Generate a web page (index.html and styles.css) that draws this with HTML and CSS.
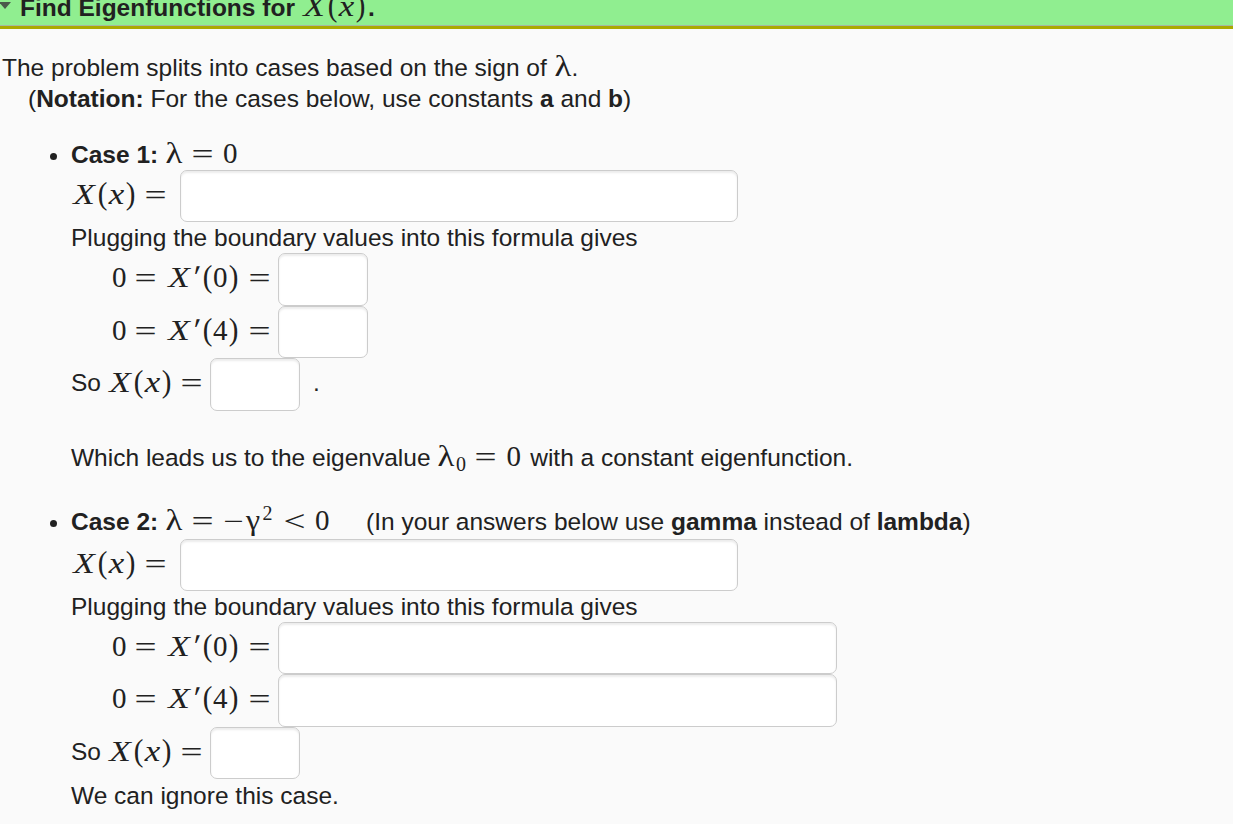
FILE: index.html
```html
<!DOCTYPE html>
<html lang="en">
    <head>
        <meta charset="utf-8">
        <meta name="viewport" content="width=device-width, initial-scale=1.0">
        <title>Find Eigenfunctions</title>
        <link rel="stylesheet" href="styles.css">
    </head>
    <body>
        <header class="section-head">
            <svg class="arrow" width="12" height="7" viewBox="0 0 12 7"><path d="M0 0H12L6 7Z"/></svg>
            <h3>Find Eigenfunctions for</h3>
            <span class="math"><i class="big-x">X</i><b class="paren">(</b><i class="var-x">x</i><b class="paren">)</b></span>
            <strong class="stop">.</strong>
        </header>
        <main>
            <p class="intro">The problem splits into cases based on the sign of <span class="math"><b class="lam">λ</b></span>.</p>
            <p class="note">(<strong>Notation:</strong> For the cases below, use constants <strong>a</strong> and <strong>b</strong>)</p>
            <ul>
                <li class="case">
                    <div class="line"><strong>Case 1:</strong> <span class="math"><b class="lam">λ</b><b class="rel">=</b><b class="num">0</b></span></div>
                    <div class="answer first">
                        <span class="math"><i class="big-x">X</i><b class="paren">(</b><i class="var-x">x</i><b class="paren">)</b><b class="rel">=</b></span>
                        <input class="long" type="text">
                    </div>
                    <div class="line">Plugging the boundary values into this formula gives</div>
                    <div class="answer indent">
                        <span class="math"><b class="num">0</b><b class="rel">=</b><i class="big-x">X</i><b class="prime">′</b><b class="paren">(</b><b class="num">0</b><b class="paren close">)</b><b class="rel">=</b></span>
                        <input class="short" type="text">
                    </div>
                    <div class="answer indent">
                        <span class="math"><b class="num">0</b><b class="rel">=</b><i class="big-x">X</i><b class="prime">′</b><b class="paren">(</b><b class="num">4</b><b class="paren close">)</b><b class="rel">=</b></span>
                        <input class="short" type="text">
                    </div>
                    <div class="answer so">
                        <span class="word">So</span>
                        <span class="math"><i class="big-x">X</i><b class="paren">(</b><i class="var-x">x</i><b class="paren">)</b><b class="rel">=</b></span>
                        <input class="short" type="text">
                        <span class="end">.</span>
                    </div>
                    <div class="line result">Which leads us to the eigenvalue <span class="math"><b class="lam">λ</b><b class="sub">0</b><b class="rel">=</b><b class="num">0</b></span> with a constant eigenfunction.</div>
                </li>
                <li class="case">
                    <div class="line"><strong>Case 2:</strong> <span class="math"><b class="lam">λ</b><b class="rel">=</b><b class="minus">−</b><b class="gam">γ</b><b class="sup">2</b><b class="rel less">&lt;</b><b class="num">0</b></span><span class="hint">(In your answers below use <strong>gamma</strong> instead of <strong>lambda</strong>)</span></div>
                    <div class="answer first">
                        <span class="math"><i class="big-x">X</i><b class="paren">(</b><i class="var-x">x</i><b class="paren">)</b><b class="rel">=</b></span>
                        <input class="long" type="text">
                    </div>
                    <div class="line">Plugging the boundary values into this formula gives</div>
                    <div class="answer indent">
                        <span class="math"><b class="num">0</b><b class="rel">=</b><i class="big-x">X</i><b class="prime">′</b><b class="paren">(</b><b class="num">0</b><b class="paren close">)</b><b class="rel">=</b></span>
                        <input class="long" type="text">
                    </div>
                    <div class="answer indent">
                        <span class="math"><b class="num">0</b><b class="rel">=</b><i class="big-x">X</i><b class="prime">′</b><b class="paren">(</b><b class="num">4</b><b class="paren close">)</b><b class="rel">=</b></span>
                        <input class="long" type="text">
                    </div>
                    <div class="answer so">
                        <span class="word">So</span>
                        <span class="math"><i class="big-x">X</i><b class="paren">(</b><i class="var-x">x</i><b class="paren">)</b><b class="rel">=</b></span>
                        <input class="short" type="text">
                    </div>
                    <div class="line last">We can ignore this case.</div>
                </li>
            </ul>
        </main>
    </body>
</html>
```

FILE: styles.css
```css
* {
    box-sizing: border-box;
}

body {
    margin: 0;
    background-color: #fafafa;
    color: #212121;
    font-family: "Liberation Sans", Arial, sans-serif;
    font-size: 24.5px;
    line-height: 31px;
    overflow: hidden;
    white-space: nowrap;
}

.section-head {
    display: flex;
    align-items: baseline;
    height: 29px;
    background-color: #90ee90;
    border-bottom: 3px solid #aaaa00;
    box-shadow: inset 0 -1px 0 #a5b8a0;
    line-height: 15px;
}

.section-head h3 {
    width: 281px;
    margin: 0 0 0 9px;
    font-size: 24.5px;
}

.arrow {
    margin-left: -1px;
    align-self: flex-start;
    margin-top: 2px;
    fill: #4b5a4b;
}

.section-head .stop {
    margin-left: 2px;
}

p {
    margin: 0;
}

.intro {
    margin-top: 23px;
    padding-left: 2px;
    height: 31px;
}

.note {
    padding-left: 28px;
    height: 31px;
}

ul {
    margin: 25px 0 0;
    padding: 0;
    list-style: none;
}

.case {
    padding-left: 71px;
}

.case + .case {
    margin-top: 33px;
}

.line {
    height: 31px;
}

.case > .line:first-child::before {
    content: "";
    display: inline-block;
    width: 7px;
    height: 7px;
    margin: 0 14px 3px -21px;
    border-radius: 50%;
    background-color: #212121;
}

.case + .case > .line:first-child {
    height: 33.3px;
}

.answer {
    display: flex;
    height: 52.5px;
}

.answer.first {
    height: 52px;
}

.answer > .math {
    padding-top: 24px;
}

.indent {
    padding-left: 41px;
}

.answer .word {
    width: 36px;
    padding-top: 9px;
}

.answer .end {
    padding-top: 9px;
    margin-left: 13px;
}

.result {
    margin-top: 31px;
}

.result .math {
    margin-right: 3px;
}

.last {
    padding-top: 1px;
}

.hint {
    margin-left: 37px;
}

input {
    height: 100%;
    margin: 0 0 0 8px;
    padding: 8px 12px;
    border: 1px solid #ccc;
    border-radius: 7px;
    background-color: #fff;
    box-shadow: inset 0 2px 2px rgba(0, 0, 0, 0.075);
    font: inherit;
}

.first input {
    margin-left: 14px;
}

.long {
    width: 559px;
}

.first .long {
    width: 558px;
}

.short {
    width: 90px;
}

/* formulas */
.math {
    display: inline-flex;
    align-items: baseline;
    font-family: "Liberation Serif", "Times New Roman", serif;
    font-size: 29px;
    line-height: 0;
}

.math b,
.math i {
    display: block;
    font-weight: normal;
    text-align: center;
}

.math .big-x {
    width: 26px;
    transform: scaleX(1.22);
}

.math .var-x {
    width: 17px;
    transform: scaleX(1.2);
}

.math .paren {
    width: 11px;
    transform: translateY(-1px) scaleY(1.07);
}

.math .close {
    width: 13px;
}

.math .num {
    width: 14px;
}

.math .rel {
    width: 21px;
    margin: 0 10px 0 9px;
    transform: translateY(1px) scaleX(1.35);
}

.answer .rel:last-child {
    margin-right: 0;
}

.math .prime {
    width: 10px;
    transform: translateY(-1px) skewX(-5deg) scale(1.15);
}

.math .lam {
    width: 18px;
    transform: scaleX(1.2);
}

.math .gam {
    width: 18px;
    transform: scaleX(1.1);
}

.math .minus {
    width: 21px;
    transform: translateY(1px) scaleX(1.25);
}

.math .less {
    margin-left: 11px;
}

.math .sub,
.math .sup {
    width: 11px;
    font-size: 20px;
}

.math .sub {
    transform: translateY(5px);
}

.math .sup {
    transform: translateY(-10px);
}
```
